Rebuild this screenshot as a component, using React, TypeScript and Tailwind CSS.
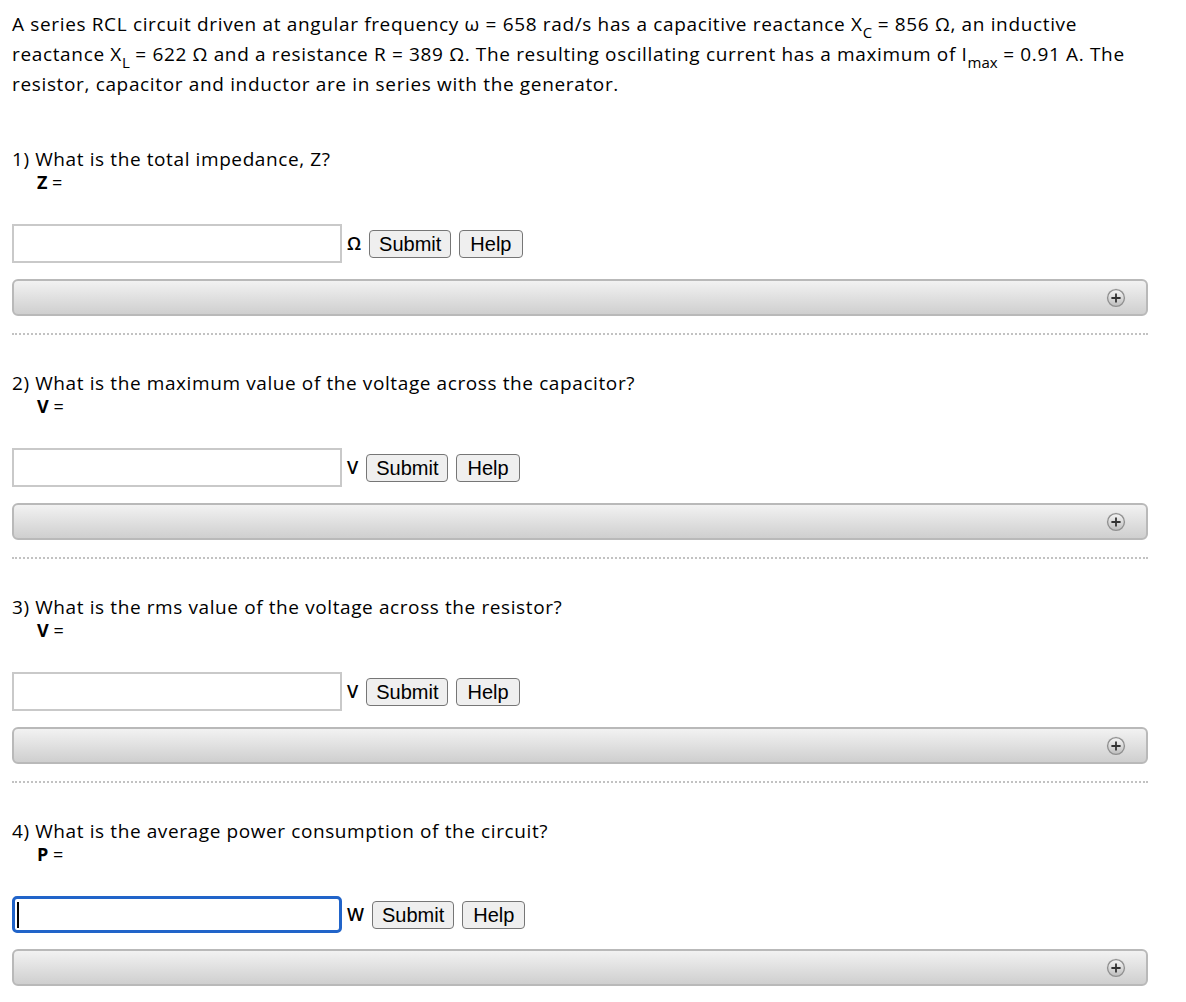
import React from "react";

const font = { fontFamily: "'Open Sans', 'Noto Sans', sans-serif" };

function PlusIcon() {
  return (
    <svg width="22" height="22" viewBox="0 0 22 22" className="block">
      <defs>
        <linearGradient id="pg" x1="0" y1="0" x2="0" y2="1">
          <stop offset="0" stopColor="#f6f6f6" />
          <stop offset="1" stopColor="#bdbdbd" />
        </linearGradient>
      </defs>
      <circle cx="11" cy="11" r="9.6" fill="#d8d8d8" />
      <circle cx="11" cy="11" r="8.4" fill="url(#pg)" stroke="#8f8f8f" strokeWidth="1.3" />
      <path d="M11 6.4 V15.6 M6.4 11 H15.6" stroke="#333" strokeWidth="1.8" />
    </svg>
  );
}

function Bar() {
  return (
    <div className="h-[37px] w-full rounded-[6px] border-2 border-[#b9b9b9] bg-gradient-to-b from-[#f2f2f2] to-[#cfcfcf] flex items-center justify-end pr-[19px]">
      <PlusIcon />
    </div>
  );
}

function Question({
  num,
  text,
  sym,
  unit,
  focused,
  last,
}: {
  num: number;
  text: string;
  sym: string;
  unit: string;
  focused?: boolean;
  last?: boolean;
}) {
  return (
    <div>
      <div className="text-[19px] leading-[23px] tracking-[0.6px] text-black">
        <div>
          {num}) {text}
        </div>
        <div className="pl-[25px] text-[18px] tracking-normal">
          <span className="font-bold">{sym}</span> =
        </div>
      </div>
      <div className="mt-[30px] flex items-center">
        {focused ? (
          <div className="h-[37px] w-[330px] rounded-[5px] border-[3px] border-[#2164c9] bg-white flex items-center pl-[2px]">
            <div className="w-[2px] h-[26px] bg-black" />
          </div>
        ) : (
          <div className="h-[39px] w-[330px] border-2 border-[#c9c9c9] bg-white" />
        )}
        <span className="ml-[5px] mr-[8px] text-[18px] font-semibold text-black">{unit}</span>
        <button
          className="h-[28px] px-[9px] rounded-[4px] border border-[#767676] bg-[#efefef] text-[20px] leading-none text-black"
          style={{ fontFamily: "'Liberation Sans', Arial, sans-serif" }}
        >
          Submit
        </button>
        <button
          className="ml-[8px] h-[28px] px-[10px] rounded-[4px] border border-[#767676] bg-[#efefef] text-[20px] leading-none text-black"
          style={{ fontFamily: "'Liberation Sans', Arial, sans-serif" }}
        >
          Help
        </button>
      </div>
      <div className="mt-[16px]">
        <Bar />
      </div>
      {!last && <div className="mt-[17px] mb-[37px] border-t-2 border-dotted border-[#c2c2c2]" />}
    </div>
  );
}

export default function App() {
  return (
    <div className="bg-white min-h-[1002px] w-[1186px] px-[12px]" style={font}>
      <div className="w-[1136px]">
        <p className="pt-[9px] text-[19px] leading-[30px] tracking-[0.65px] text-black whitespace-nowrap">
          A series RCL circuit driven at angular frequency ω = 658 rad/s has a capacitive reactance X
          <sub className="text-[15px] leading-none tracking-normal" style={{ verticalAlign: "-3px" }}>C</sub> = 856 Ω, an inductive
          <br />
          reactance X<sub className="text-[15px] leading-none tracking-normal" style={{ verticalAlign: "-3px" }}>L</sub> = 622 Ω and a
          resistance R = 389 Ω. The resulting oscillating current has a maximum of I
          <sub className="text-[15px] leading-none tracking-normal" style={{ verticalAlign: "-3px" }}>max</sub> = 0.91 A. The
          <br />
          resistor, capacitor and inductor are in series with the generator.
        </p>
        <div className="mt-[49px]">
          <Question num={1} text="What is the total impedance, Z?" sym="Z" unit="Ω" />
          <Question num={2} text="What is the maximum value of the voltage across the capacitor?" sym="V" unit="V" />
          <Question num={3} text="What is the rms value of the voltage across the resistor?" sym="V" unit="V" />
          <Question num={4} text="What is the average power consumption of the circuit?" sym="P" unit="W" focused last />
        </div>
      </div>
    </div>
  );
}
